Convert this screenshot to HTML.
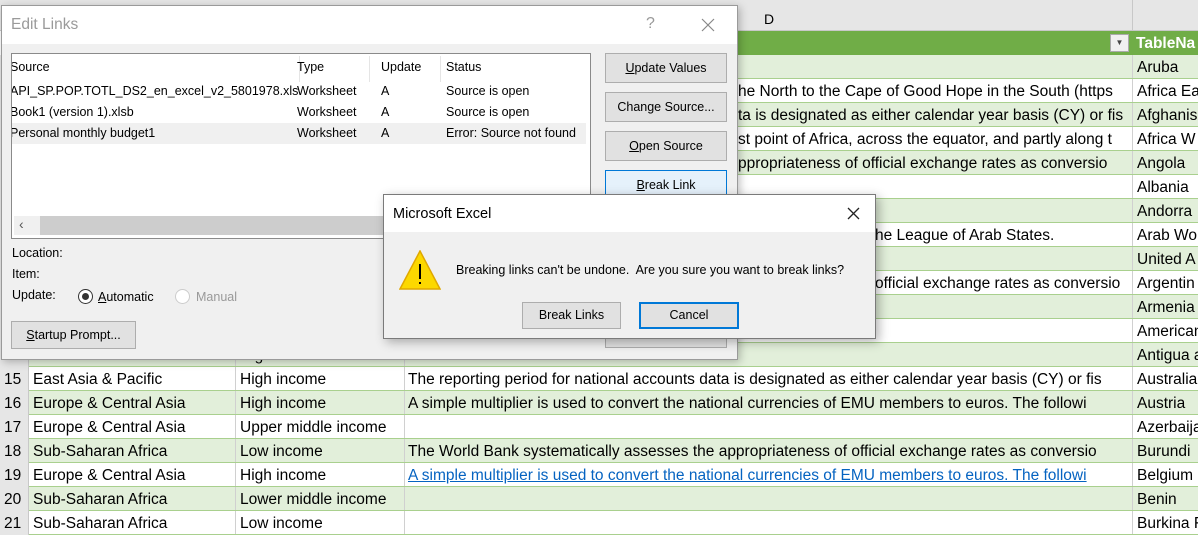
<!DOCTYPE html>
<html><head><style>
*{margin:0;padding:0;box-sizing:border-box}
body{width:1198px;height:540px;overflow:hidden;background:#fff;position:relative;font-family:"Liberation Sans",sans-serif}
.abs{position:absolute}
.row{position:absolute;left:0;width:1198px;height:24px;border-bottom:1px solid #a9d08e;font-size:15.5px;line-height:25px;color:#000}
.row.g{background:#e2efda}
.row span{position:absolute;top:0;white-space:nowrap;overflow:hidden;padding-left:4px}
.rn{left:0;width:29px;background:#e6e6e6;border-right:1px solid #c8c8c8;padding-left:4px!important;text-align:left}
.btn{position:absolute;background:#e1e1e1;border:1px solid #adadad;font-size:12.5px;text-align:center;color:#000}
.dlg{font-size:12.5px;color:#000}
</style></head><body>
<div class="abs" style="left:0;top:0;width:1198px;height:31px;background:#e6e6e6;border-bottom:1px solid #c8c8c8"></div>
<div class="abs" style="left:764px;top:11px;font-size:14px">D</div>
<div class="abs" style="left:1132px;top:0;width:1px;height:31px;background:#c8c8c8"></div>
<div class="abs" style="left:29px;top:31px;width:1169px;height:24px;background:#70ad47"></div>
<div class="abs" style="left:1110px;top:34px;width:19px;height:18px;background:#f0f0f0;border:1px solid #aaa;font-size:8px;text-align:center;line-height:16px;color:#444">▼</div>
<div class="abs" style="left:1136px;top:35px;color:#fff;font-weight:bold;font-size:15.5px">TableNa</div>
<div id="rows"></div>
<script>
var d=[
["","","","Aruba"],
["","","he North to the Cape of Good Hope in the South (https","Africa Ea"],
["","","ta is designated as either calendar year basis (CY) or fis","Afghanis"],
["","","st point of Africa, across the equator, and partly along t","Africa W"],
["","","ppropriateness of official exchange rates as conversio","Angola"],
["","","","Albania"],
["","","","Andorra"],
["","","he League of Arab States.","Arab Wo"],
["","","","United A"],
["","","official exchange rates as conversio","Argentin"],
["","","","Armenia"],
["","","","American"],
["Latin America & Caribbean","High income","","Antigua a"],
["East Asia & Pacific","High income","The reporting period for national accounts data is designated as either calendar year basis (CY) or fis","Australia"],
["Europe & Central Asia","High income","A simple multiplier is used to convert the national currencies of EMU members to euros. The followi","Austria"],
["Europe & Central Asia","Upper middle income","","Azerbaija"],
["Sub-Saharan Africa","Low income","The World Bank systematically assesses the appropriateness of official exchange rates as conversio","Burundi"],
["Europe & Central Asia","High income","A simple multiplier is used to convert the national currencies of EMU members to euros. The followi","Belgium"],
["Sub-Saharan Africa","Lower middle income","","Benin"],
["Sub-Saharan Africa","Low income","","Burkina F"]];
var h="";
for(var i=0;i<d.length;i++){var n=i+2,t=55+i*24,r=d[i];
var cpos=(i<12)?738:404;
if(i==7||i==9)cpos=875;
var link=(n==19)?'color:#0563c1;text-decoration:underline;':'';
h+='<div class="row'+(n%2==0?' g':'')+'" style="top:'+t+'px">'
+'<span class="rn" style="height:24px">'+n+'</span>'
+'<span style="left:29px;width:206px">'+r[0]+'</span>'
+'<span style="left:235px;width:169px;border-left:1px solid #d0d0d0;height:23px">'+r[1]+'</span>'
+'<span style="left:404px;width:728px;border-left:1px solid #d0d0d0;height:23px"></span>'
+'<span style="left:'+(cpos)+'px;width:'+(1132-cpos)+'px;padding-left:'+(i<12?'0':'4px')+';'+link+'">'+r[2]+'</span>'
+'<span style="left:1132px;width:66px;border-left:1px solid #d0d0d0;height:23px">'+r[3]+'</span></div>';}
document.getElementById('rows').innerHTML=h;
</script>
<div class="abs dlg" style="left:1px;top:5px;width:737px;height:355px;background:#f0f0f0;border:1px solid #9a9a9a;box-shadow:2px 2px 8px rgba(0,0,0,.25)">
 <div class="abs" style="left:0;top:0;width:735px;height:38px;background:#fff"></div>
 <div class="abs" style="left:9px;top:10px;font-size:15.5px;color:#9a9a9a">Edit Links</div>
 <div class="abs" style="left:644px;top:9px;font-size:16px;color:#999">?</div>
 <svg class="abs" style="left:699px;top:12px" width="14" height="14"><path d="M1 1L13 13M13 1L1 13" stroke="#888" stroke-width="1.2"/></svg>
 <div class="abs" style="left:9px;top:47px;width:580px;height:186px;border:1px solid #8a8a8a;background:#fff;overflow:hidden">
  <div class="abs" style="left:0;top:6px;white-space:nowrap">
   <div class="abs" style="left:-2px;top:0">Source</div><div class="abs" style="left:287px;top:-4px;width:1px;height:26px;background:#e5e5e5"></div>
   <div class="abs" style="left:285px;top:0">Type</div><div class="abs" style="left:357px;top:-4px;width:1px;height:26px;background:#e5e5e5"></div>
   <div class="abs" style="left:369px;top:0">Update</div><div class="abs" style="left:428px;top:-4px;width:1px;height:26px;background:#e5e5e5"></div>
   <div class="abs" style="left:434px;top:0">Status</div>
  </div>
  <div class="abs" style="left:0;top:27px;width:574px;line-height:21px;white-space:nowrap">
   <div style="position:relative;height:21px"><span class="abs" style="left:-2px">API_SP.POP.TOTL_DS2_en_excel_v2_5801978.xls</span><span class="abs" style="left:285px">Worksheet</span><span class="abs" style="left:369px">A</span><span class="abs" style="left:434px">Source is open</span></div>
   <div style="position:relative;height:21px"><span class="abs" style="left:-2px">Book1 (version 1).xlsb</span><span class="abs" style="left:285px">Worksheet</span><span class="abs" style="left:369px">A</span><span class="abs" style="left:434px">Source is open</span></div>
   <div style="position:relative;height:21px;background:#f0f0f0"><span class="abs" style="left:-2px">Personal monthly budget1</span><span class="abs" style="left:285px">Worksheet</span><span class="abs" style="left:369px">A</span><span class="abs" style="left:434px">Error: Source not found</span></div>
  </div>
  <div class="abs" style="left:2px;top:162px;width:576px;height:19px;background:#f0f0f0"></div>
  <div class="abs" style="left:28px;top:162px;width:550px;height:19px;background:#cdcdcd"></div>
  <div class="abs" style="left:7px;top:162px;font-size:14px;color:#555">‹</div>
 </div>
 <div class="abs" style="left:10px;top:240px">Location:</div>
 <div class="abs" style="left:10px;top:261px">Item:</div>
 <div class="abs" style="left:10px;top:282px">Update:</div>
 <div class="abs" style="left:76px;top:283px;width:15px;height:15px;border-radius:50%;border:1px solid #333;background:#fff"><div style="margin:3px;width:7px;height:7px;border-radius:50%;background:#333"></div></div>
 <div class="abs" style="left:96px;top:284px"><u>A</u>utomatic</div>
 <div class="abs" style="left:173px;top:283px;width:15px;height:15px;border-radius:50%;border:1px solid #ccc;background:#fff"></div>
 <div class="abs" style="left:194px;top:284px;color:#999">Manual</div>
 <div class="btn" style="left:9px;top:315px;width:125px;height:28px;line-height:26px"><u>S</u>tartup Prompt...</div>
 <div class="btn" style="left:603px;top:47px;width:122px;height:30px;line-height:28px"><u>U</u>pdate Values</div>
 <div class="btn" style="left:603px;top:86px;width:122px;height:30px;line-height:28px">Change Source...</div>
 <div class="btn" style="left:603px;top:125px;width:122px;height:30px;line-height:28px"><u>O</u>pen Source</div>
 <div class="btn" style="left:603px;top:164px;width:122px;height:30px;line-height:28px;background:#e5f1fb;border-color:#0078d7"><u>B</u>reak Link</div>
 <div class="btn" style="left:603px;top:312px;width:122px;height:30px;line-height:28px">Close</div>
</div>
<div class="abs dlg" style="left:383px;top:194px;width:493px;height:145px;background:#f0f0f0;border:1px solid #7a7a7a;box-shadow:3px 3px 10px rgba(0,0,0,.3)">
 <div class="abs" style="left:0;top:0;width:491px;height:37px;background:#fff"></div>
 <div class="abs" style="left:9px;top:11px;font-size:14.5px">Microsoft Excel</div>
 <svg class="abs" style="left:463px;top:12px" width="13" height="13"><path d="M1 1L12 12M12 1L1 12" stroke="#222" stroke-width="1.3"/></svg>
 <svg class="abs" style="left:15px;top:55px" width="42" height="40" viewBox="0 0 42 40"><polygon points="21,1 41,39 1,39" fill="#fcd800" stroke="#e0a800" stroke-width="1.5"/><rect x="20" y="14" width="2" height="15" fill="#000"/><rect x="20" y="32" width="2" height="2" fill="#000"/></svg>
 <div class="abs" style="left:72px;top:68px;white-space:nowrap;font-size:12.5px">Breaking links can't be undone.&nbsp; Are you sure you want to break links?</div>
 <div class="btn" style="left:138px;top:107px;width:99px;height:27px;line-height:25px">Break Links</div>
 <div class="btn" style="left:255px;top:107px;width:100px;height:27px;line-height:23px;border:2px solid #0078d7">Cancel</div>
</div>
</body></html>
